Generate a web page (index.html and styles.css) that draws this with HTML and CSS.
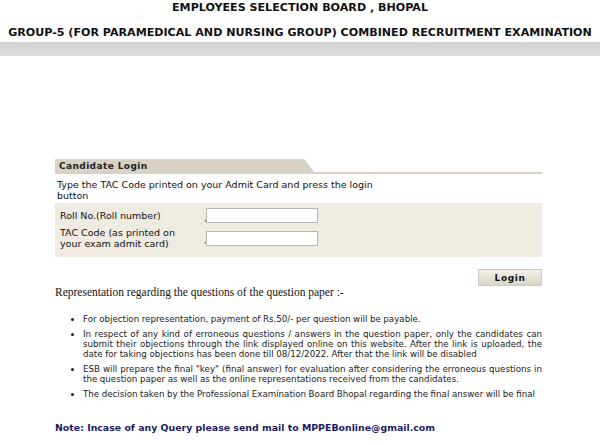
FILE: index.html
```html
<!DOCTYPE html>
<html lang="en">

<head>
    <meta charset="UTF-8">
    <meta name="viewport" content="width=device-width, initial-scale=1.0">
    <title>Candidate Login</title>
    <link rel="stylesheet" href="styles.css">
</head>

<body>

    <div class="header">
        <h1>EMPLOYEES SELECTION BOARD , BHOPAL</h1>
        <h2>GROUP-5 (FOR PARAMEDICAL AND NURSING GROUP) COMBINED RECRUITMENT EXAMINATION</h2>
    </div>
    <div class="grey-bar"></div>

    <div class="content">
        <div class="login-panel">
            <div class="tab-row">
                <div class="tab">Candidate Login</div>
                <div class="tab-line"></div>
            </div>
            <p class="instruction">Type the TAC Code printed on your Admit Card and press the login<br>button</p>
            <div class="login-form">
                <div class="form-row">
                    <label class="form-label">Roll No.(Roll number)</label>
                    <span class="mark">,</span>
                    <input type="text" class="form-input">
                </div>
                <div class="form-row">
                    <label class="form-label">TAC Code (as printed on<br>your exam admit card)</label>
                    <span class="mark">,</span>
                    <input type="text" class="form-input">
                </div>
            </div>
            <div class="button-row">
                <button class="login-btn">Login</button>
            </div>
        </div>

        <p class="rep-title">Representation regarding the questions of the question paper :-</p>

        <ul class="notes">
            <li>For objection representation, payment of Rs.50/- per question will be payable.</li>
            <li>In respect of any kind of erroneous questions / answers in the question paper, only the candidates can submit their objections through the link displayed online on this website. After the link is uploaded, the date for taking objections has been done till 08/12/2022. After that the link will be disabled</li>
            <li>ESB will prepare the final "key" (final answer) for evaluation after considering the erroneous questions in the question paper as well as the online representations received from the candidates.</li>
            <li>The decision taken by the Professional Examination Board Bhopal regarding the final answer will be final</li>
        </ul>

        <p class="query-note">Note: Incase of any Query please send mail to MPPEBonline@gmail.com</p>
    </div>

</body>

</html>
```

FILE: styles.css
```css
body {
    margin: 0;
    padding: 0;
    background-color: #fff;
    font-family: "DejaVu Sans", Verdana, sans-serif;
    color: #111;
    overflow: hidden;
}

.header {
    text-align: center;
    padding-top: 1px;
}

.header h1 {
    margin: 0;
    font-size: 11.1px;
    line-height: 13px;
    font-weight: bold;
}

.header h2 {
    margin: 12px 0 0 0;
    font-size: 11.1px;
    line-height: 14px;
    font-weight: bold;
    white-space: nowrap;
}

.grey-bar {
    margin-top: 2px;
    height: 14px;
    background: linear-gradient(#d2d2d2, #dcdcdc);
}

.content {
    padding: 0 58px 0 55px;
}

.login-panel {
    margin-top: 103px;
}

.tab-row {
    display: flex;
    align-items: flex-end;
}

.tab {
    position: relative;
    width: 245px;
    height: 15px;
    padding-left: 4px;
    background-color: #d9d1c6;
    font-size: 9px;
    font-weight: bold;
    letter-spacing: 0.4px;
    line-height: 15px;
    color: #222;
}

.tab::after {
    content: "";
    position: absolute;
    right: -12px;
    top: 0;
    border-bottom: 15px solid #d9d1c6;
    border-right: 12px solid transparent;
}

.tab-line {
    flex: 1;
    height: 2px;
    background-color: #d9d1c6;
}

.instruction {
    margin: 0;
    padding: 5px 3px 2px 2px;
    font-size: 9.5px;
    line-height: 11px;
}

.login-form {
    background-color: #efebe2;
    padding: 5px 0 5px 0;
    height: 44px;
}

.form-row {
    display: flex;
    align-items: center;
    margin-bottom: 4px;
}

.form-label {
    width: 144px;
    padding-left: 5px;
    font-size: 9.5px;
    line-height: 11px;
}

.mark {
    font-size: 8px;
    color: #444;
    width: 2px;
    margin-top: 5px;
}

.form-input {
    width: 110px;
    height: 13px;
    padding: 0;
    margin: 0;
    border: 1px solid #b5b5b5;
    background-color: #fff;
}

.button-row {
    display: flex;
    justify-content: flex-end;
    margin-top: 12px;
}

.login-btn {
    width: 64px;
    height: 17px;
    padding: 0;
    border: 1px solid #cfcabd;
    background: linear-gradient(#f3f1ea, #d8d3c5);
    font-family: "DejaVu Sans", Verdana, sans-serif;
    font-size: 9px;
    font-weight: bold;
    letter-spacing: 0.6px;
    color: #111;
}

.rep-title {
    margin: 0;
    font-family: "Liberation Serif", "Times New Roman", serif;
    font-size: 11.5px;
    line-height: 13px;
}

.notes {
    margin: 15px 0 0 0;
    padding-left: 28px;
    font-size: 8.7px;
    line-height: 10px;
    word-spacing: -0.2px;
    text-align: justify;
    color: #222;
}

.notes li {
    margin-bottom: 5px;
}

.query-note {
    margin: 23px 0 0 0;
    font-size: 9.4px;
    font-weight: bold;
    color: #1b1b63;
}
```
